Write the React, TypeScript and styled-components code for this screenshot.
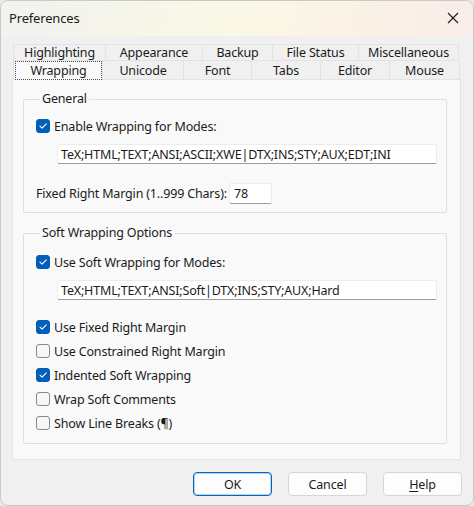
import React from "react";
import styled, { createGlobalStyle } from "styled-components";

const GlobalStyle = createGlobalStyle`
  html, body {
    margin: 0;
    padding: 0;
    background: #e9e9e9;
  }
  body {
    font-family: "Noto Sans", "Open Sans", sans-serif;
    font-size: 12.5px;
    letter-spacing: -0.17px;
    color: #1b1b1b;
  }
`;

const topTabs = [
  { label: "Highlighting", width: 92 },
  { label: "Appearance", width: 97 },
  { label: "Backup", width: 70 },
  { label: "File Status", width: 86 },
  { label: "Miscellaneous", width: 101 }
];

const bottomTabs = [
  { label: "Wrapping", width: 89, selected: true },
  { label: "Unicode", width: 81 },
  { label: "Font", width: 68 },
  { label: "Tabs", width: 69 },
  { label: "Editor", width: 69 },
  { label: "Mouse", width: 71 }
];

const softOptions = [
  { label: "Use Fixed Right Margin", checked: true },
  { label: "Use Constrained Right Margin", checked: false },
  { label: "Indented Soft Wrapping", checked: true },
  { label: "Wrap Soft Comments", checked: false },
  { label: "Show Line Breaks (¶)", checked: false }
];

const CheckBox: React.FC<{ checked: boolean }> = ({ checked }) => (
  <Box $checked={checked}>
    {checked && (
      <svg width="10" height="10" viewBox="0 0 10 10">
        <path
          d="M2 5.2 L4.1 7.2 L8.2 2.8"
          fill="none"
          stroke="#ffffff"
          strokeWidth="1.1"
          strokeLinecap="round"
          strokeLinejoin="round"
        />
      </svg>
    )}
  </Box>
);

const CheckRow: React.FC<{ checked: boolean; label: string }> = ({
  checked,
  label
}) => (
  <Row>
    <CheckBox checked={checked} />
    <RowLabel>{label}</RowLabel>
  </Row>
);

const App: React.FC = () => {
  return (
    <>
      <GlobalStyle />
      <Window>
        <TitleBar>
          <Title>Preferences</Title>
          <CloseButton>
            <svg width="12" height="12" viewBox="0 0 12 12">
              <path
                d="M1 1 L11 11 M11 1 L1 11"
                stroke="#1b1b1b"
                strokeWidth="1.1"
              />
            </svg>
          </CloseButton>
        </TitleBar>

        <Body>
          <TabStrip>
            <TabRow $height={16}>
              {topTabs.map(tab => (
                <Tab key={tab.label} $width={tab.width}>
                  {tab.label}
                </Tab>
              ))}
            </TabRow>
            <TabRow $height={19}>
              {bottomTabs.map(tab => (
                <Tab
                  key={tab.label}
                  $width={tab.width}
                  $selected={tab.selected}
                >
                  {tab.selected ? <Focus>{tab.label}</Focus> : tab.label}
                </Tab>
              ))}
            </TabRow>
          </TabStrip>

          <Panel>
            <Group>
              <Legend>General</Legend>
              <CheckRow checked label="Enable Wrapping for Modes:" />
              <TextInput $top={6}>
                TeX;HTML;TEXT;ANSI;ASCII;XWE|DTX;INS;STY;AUX;EDT;INI
              </TextInput>
              <MarginRow>
                <MarginLabel>Fixed Right Margin (1..999 Chars):</MarginLabel>
                <NumberInput>78</NumberInput>
              </MarginRow>
            </Group>

            <SoftGroup>
              <Legend>Soft Wrapping Options</Legend>
              <CheckRow checked label="Use Soft Wrapping for Modes:" />
              <TextInput $top={6}>
                TeX;HTML;TEXT;ANSI;Soft|DTX;INS;STY;AUX;Hard
              </TextInput>
              <OptionList>
                {softOptions.map(option => (
                  <CheckRow
                    key={option.label}
                    checked={option.checked}
                    label={option.label}
                  />
                ))}
              </OptionList>
            </SoftGroup>
          </Panel>

          <ButtonBar>
            <Button $primary>OK</Button>
            <Button>Cancel</Button>
            <Button>
              <u>H</u>elp
            </Button>
          </ButtonBar>
        </Body>
      </Window>
    </>
  );
};

const Window = styled.div`
  width: 474px;
  height: 506px;
  box-sizing: border-box;
  background: #f0f0f0;
  border-radius: 8px;
  border: 1px solid #c9c9c9;
  overflow: hidden;
  display: flex;
  flex-direction: column;
`;

const TitleBar = styled.div`
  height: 35px;
  flex: none;
  display: flex;
  align-items: center;
  justify-content: space-between;
  padding: 0 0 2px 8px;
  box-sizing: border-box;
  background: linear-gradient(
    100deg,
    #f2f2f0 0%,
    #f6f5ea 25%,
    #fbf8e6 50%,
    #fbf2e6 75%,
    #f8ede8 100%
  );
`;

const Title = styled.span`
  font-size: 13px;
`;

const CloseButton = styled.div`
  width: 46px;
  height: 32px;
  display: flex;
  align-items: center;
  justify-content: center;
  margin-right: -3px;
`;

const Body = styled.div`
  flex: 1;
  display: flex;
  flex-direction: column;
  padding: 8px 12px 0 11px;
`;

const TabStrip = styled.div`
  display: flex;
  flex-direction: column;
  padding-left: 1px;
`;

const TabRow = styled.div<{ $height: number }>`
  display: flex;
  height: ${p => p.$height}px;
`;

const Tab = styled.div<{ $width: number; $selected?: boolean }>`
  width: ${p => p.$width}px;
  box-sizing: border-box;
  display: flex;
  align-items: center;
  justify-content: center;
  border-top: 1px solid #e3e3e3;
  border-left: 1px solid #e3e3e3;
  background: ${p => (p.$selected ? "#f9f9f9" : "#f0f0f0")};
  line-height: 15px;
  position: relative;
  z-index: ${p => (p.$selected ? 1 : 0)};
  margin-bottom: ${p => (p.$selected ? "-1px" : "0")};

  &:last-child {
    border-right: 1px solid #e3e3e3;
  }
`;

const Focus = styled.span`
  position: absolute;
  inset: 0 0 0 1px;
  display: flex;
  align-items: center;
  justify-content: center;
  border: 1px dotted #4a4a4a;
`;

const Panel = styled.div`
  width: 449px;
  height: 381px;
  box-sizing: border-box;
  background: #f9f9f9;
  border: 1px solid #e3e3e3;
  padding: 11px 0 0 10px;
`;

const Group = styled.fieldset`
  width: 424px;
  box-sizing: border-box;
  margin: 0;
  border: 1px solid #dfdfdf;
  border-radius: 2px;
  padding: 7px 0 8px 12px;
`;

const SoftGroup = styled(Group)`
  margin-top: 12px;
  padding-top: 9px;
`;

const Legend = styled.legend`
  line-height: 16px;
  padding: 0 2px;
  margin-left: 4px;
  color: #1b1b1b;
`;

const Row = styled.div`
  height: 24px;
  display: flex;
  align-items: center;
  gap: 4px;
`;

const Box = styled.div<{ $checked: boolean }>`
  width: 14px;
  height: 14px;
  box-sizing: border-box;
  border-radius: 3px;
  display: flex;
  align-items: center;
  justify-content: center;
  background: ${p => (p.$checked ? "#005fb8" : "#f7f7f7")};
  border: 1px solid ${p => (p.$checked ? "#005fb8" : "#8a8a8a")};
`;

const RowLabel = styled.span`
  white-space: nowrap;
`;

const TextInput = styled.div<{ $top: number }>`
  margin: ${p => p.$top}px 0 0 21px;
  width: 380px;
  height: 20px;
  box-sizing: border-box;
  background: #ffffff;
  border: 1px solid #ececec;
  border-bottom-color: #9c9c9c;
  border-radius: 2px;
  padding-left: 3px;
  display: flex;
  align-items: center;
  white-space: nowrap;
`;

const MarginRow = styled.div`
  margin-top: 18px;
  height: 22px;
  display: flex;
  align-items: center;
`;

const MarginLabel = styled.span`
  width: 193px;
  white-space: nowrap;
`;

const NumberInput = styled.div`
  width: 43px;
  height: 21px;
  box-sizing: border-box;
  background: #ffffff;
  border: 1px solid #ececec;
  border-bottom-color: #9c9c9c;
  border-radius: 2px;
  padding-left: 4px;
  display: flex;
  align-items: center;
`;

const OptionList = styled.div`
  margin-top: 15px;
  display: flex;
  flex-direction: column;
`;

const ButtonBar = styled.div`
  display: flex;
  justify-content: flex-end;
  gap: 16px;
  margin-top: 12px;
  margin-right: -1px;
`;

const Button = styled.div<{ $primary?: boolean }>`
  width: 79px;
  height: 24px;
  box-sizing: border-box;
  border-radius: 4px;
  background: #fdfdfd;
  border: 1px solid ${p => (p.$primary ? "#0067c0" : "#d6d6d6")};
  box-shadow: ${p => (p.$primary ? "inset 0 0 0 1px #b9d3ee" : "none")};
  display: flex;
  align-items: center;
  justify-content: center;

  u {
    text-underline-offset: 2px;
  }
`;

export default App;
